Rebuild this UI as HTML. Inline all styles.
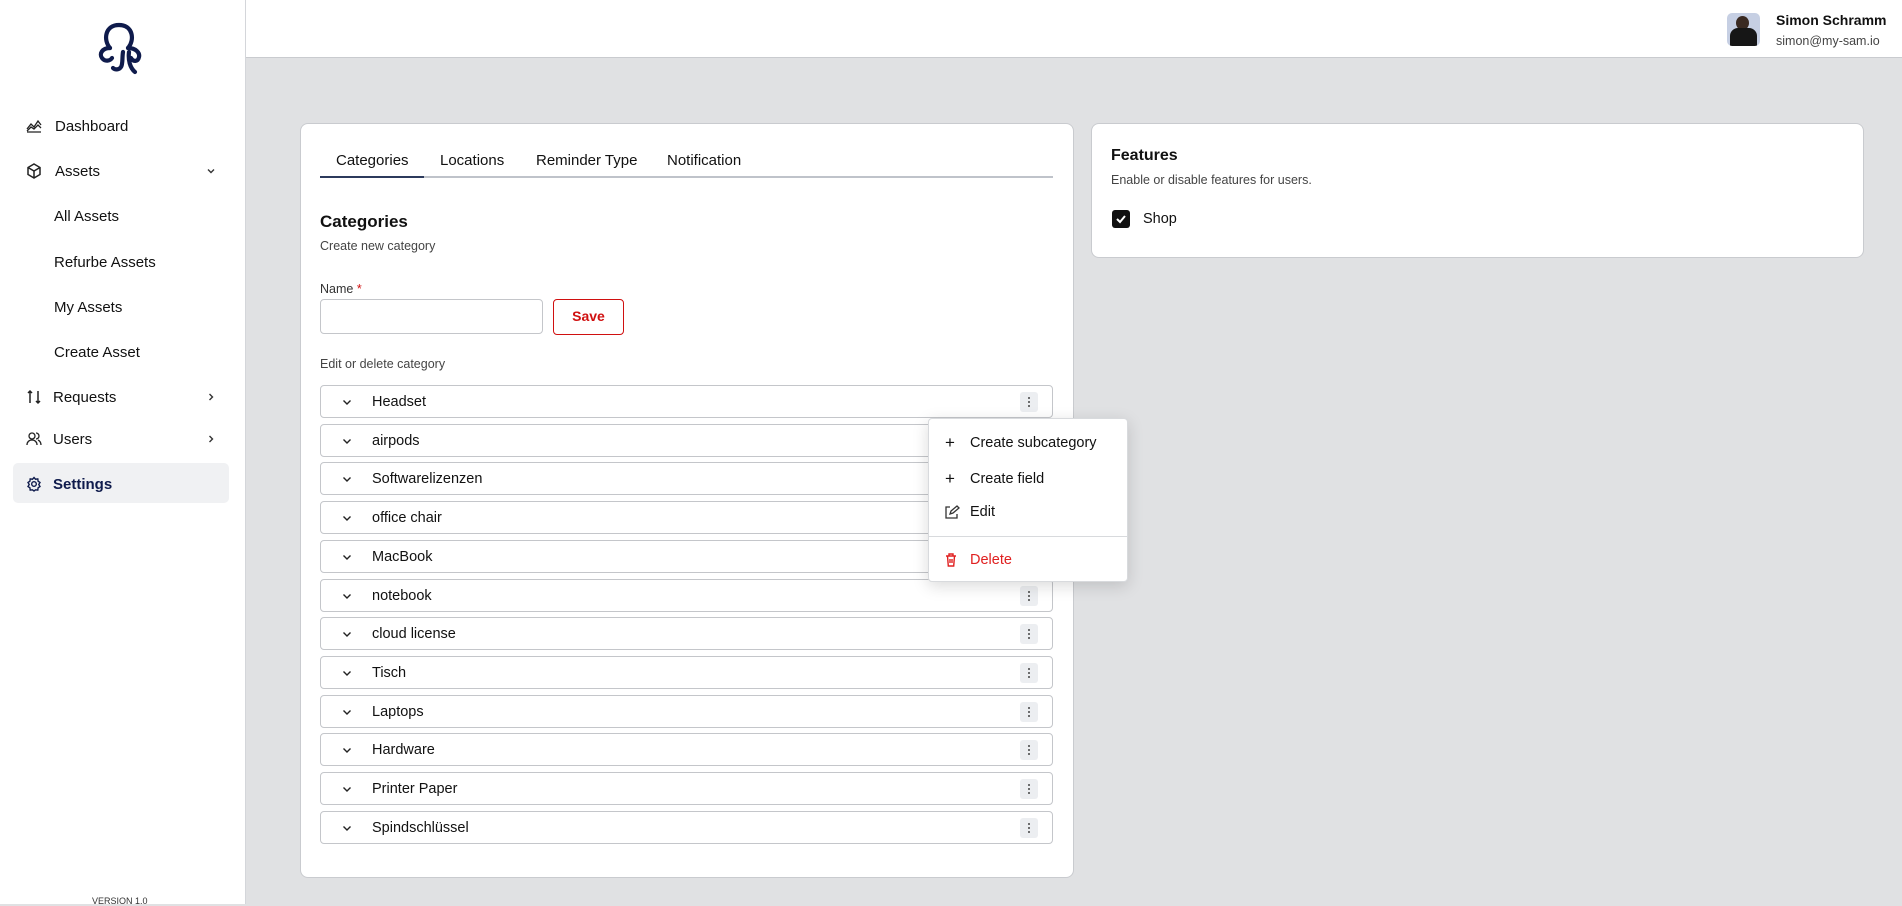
<!DOCTYPE html>
<html><head><meta charset="utf-8"><style>
*{box-sizing:border-box;margin:0;padding:0}
body{width:1902px;height:904px;overflow:hidden;background:#e0e1e3;font-family:"Liberation Sans",sans-serif;color:#111;position:relative}
.abs{position:absolute}
#side{left:0;top:0;width:246px;height:904px;background:#fff;border-right:1px solid #d4d6da}
#head{left:246px;top:0;width:1656px;height:58px;background:#fff;border-bottom:1px solid #c9cbcf}
.nav{position:absolute;left:0;font-size:15px;color:#111;display:flex;align-items:center;height:20px}
.nav svg{position:absolute;left:26px}
.card{position:absolute;background:#fff;border:1px solid #c9cbcf;border-radius:8px}
.row{position:absolute;left:320px;width:733px;height:33px;border:1px solid #c4c6ca;border-radius:4px;background:#fff;font-size:14.5px}
.row .t{position:absolute;left:51px;top:8px}
.row .ch{position:absolute;left:20px;top:10px}
.row .k{position:absolute;right:14px;top:6px;width:18px;height:20px;background:#eceef1;border-radius:3px}
.k i{position:absolute;left:8px;width:2px;height:2px;background:#444;border-radius:1px}
.mi{position:absolute;left:0;font-size:14.5px;display:flex;align-items:center}
</style></head><body>
<div id="side" class="abs">
<svg class="abs" style="left:90px;top:20px" width="70" height="60" viewBox="0 0 70 60" fill="none" stroke="#0f1b4c" stroke-width="4.2" stroke-linecap="round">
<path d="M20 28 C13 20 15 5 29 5 C43 5 45 20 38 28"/>
<path d="M20 28 C12 28 9 34 12 38 C15 42 20 41 22 38"/>
<path d="M38 28 C46 28 50 33 49 37 C48 42 43 42 41 38"/>
<path d="M33 32 C32 38 33 44 31 47 C29 50 25 50 23 48"/>
<path d="M39 32 C38 40 40 48 45 52"/>
</svg>
<div class="nav" style="top:116px;width:246px"><svg width="16" height="16" viewBox="0 0 16 16" fill="none" stroke="#222" stroke-width="1.3"><path d="M1 14h14M1 11l4-5 3 3 4-6 3 4M1 13l4-4 3 2 4-4 3 3"/></svg><span style="position:absolute;left:55px">Dashboard</span></div>
<div class="nav" style="top:161px;width:246px"><svg width="16" height="16" viewBox="0 0 16 16" fill="none" stroke="#222" stroke-width="1.5"><path d="M8 1l6 3.5v7L8 15 2 11.5v-7zM2 4.5L8 8l6-3.5M8 8v7"/></svg><span style="position:absolute;left:55px">Assets</span><svg style="left:206px" width="10" height="10" viewBox="0 0 10 10" fill="none" stroke="#333" stroke-width="1.4"><path d="M2 3.5l3 3 3-3"/></svg></div>
<div class="nav" style="top:206px;left:54px">All Assets</div>
<div class="nav" style="top:252px;left:54px">Refurbe Assets</div>
<div class="nav" style="top:297px;left:54px">My Assets</div>
<div class="nav" style="top:342px;left:54px">Create Asset</div>
<div class="nav" style="top:387px;width:246px"><svg width="16" height="16" viewBox="0 0 16 16" fill="none" stroke="#222" stroke-width="1.5"><path d="M4 2v12M2 4l2-2 2 2M12 14V2M10 12l2 2 2-2"/></svg><span style="position:absolute;left:53px">Requests</span><svg style="left:206px" width="10" height="10" viewBox="0 0 10 10" fill="none" stroke="#333" stroke-width="1.4"><path d="M3.5 2l3 3-3 3"/></svg></div>
<div class="nav" style="top:429px;width:246px"><svg width="16" height="16" viewBox="0 0 16 16" fill="none" stroke="#222" stroke-width="1.3"><circle cx="6" cy="5" r="3"/><path d="M1 14c0-3 2-5 5-5s5 2 5 5M10 2a3 3 0 010 6M12 9c2 1 3 3 3 5"/></svg><span style="position:absolute;left:53px">Users</span><svg style="left:206px" width="10" height="10" viewBox="0 0 10 10" fill="none" stroke="#333" stroke-width="1.4"><path d="M3.5 2l3 3-3 3"/></svg></div>
<div class="abs" style="left:13px;top:463px;width:216px;height:40px;background:#f0f1f3;border-radius:5px"></div>
<div class="nav" style="top:474px;width:246px;color:#0f1b4c;font-weight:bold"><svg width="16" height="16" viewBox="0 0 16 16" fill="none" stroke="#0f1b4c" stroke-width="1.4"><circle cx="8" cy="8" r="2.3"/><path d="M8 1.5l1.5 1.7 2.3-.3.3 2.3L14 6.5 12.8 8.5 14 10.5l-1.9 1.3-.3 2.3-2.3-.3L8 15l-1.5-1.2-2.3.3-.3-2.3L2 10.5 3.2 8.5 2 6.5l1.9-1.3.3-2.3 2.3.3z"/></svg><span style="position:absolute;left:53px">Settings</span></div>
<div class="abs" style="left:92px;top:896px;font-size:9px;color:#333">VERSION 1.0</div>
</div>
<div id="head" class="abs"></div>
<div class="abs" style="left:1727px;top:13px;width:33px;height:33px;border-radius:5px;background:#c6cfe3;overflow:hidden"><div style="position:absolute;left:9px;top:3px;width:13px;height:14px;border-radius:50%;background:#3a2a22"></div><div style="position:absolute;left:3px;top:15px;width:27px;height:22px;border-radius:8px 8px 0 0;background:#161616"></div></div>
<div class="abs" style="left:1776px;top:12px;font-size:14px;font-weight:bold">Simon Schramm</div>
<div class="abs" style="left:1776px;top:34px;font-size:12.5px;color:#444">simon@my-sam.io</div>

<div class="card" style="left:300px;top:123px;width:774px;height:755px"></div>
<div class="abs" style="left:336px;top:152px;font-size:15px">Categories</div>
<div class="abs" style="left:440px;top:152px;font-size:15px">Locations</div>
<div class="abs" style="left:536px;top:152px;font-size:15px">Reminder Type</div>
<div class="abs" style="left:667px;top:152px;font-size:15px">Notification</div>
<div class="abs" style="left:320px;top:176px;width:733px;height:2px;background:#bfc3ca"></div>
<div class="abs" style="left:320px;top:176px;width:104px;height:2px;background:#2c3a5c"></div>
<div class="abs" style="left:320px;top:212px;font-size:17px;font-weight:bold">Categories</div>
<div class="abs" style="left:320px;top:239px;font-size:12.5px;color:#444">Create new category</div>
<div class="abs" style="left:320px;top:282px;font-size:12.5px;color:#333">Name <span style="color:#d01010">*</span></div>
<div class="abs" style="left:320px;top:299px;width:223px;height:35px;border:1px solid #c4c6ca;border-radius:4px"></div>
<div class="abs" style="left:553px;top:299px;width:71px;height:36px;border:1.5px solid #d01010;border-radius:4px;color:#d01010;font-weight:bold;font-size:14px;text-align:center;line-height:33px">Save</div>
<div class="abs" style="left:320px;top:357px;font-size:12.5px;color:#444">Edit or delete category</div>

<div id="rows"></div>
<script>
var n=["Headset","airpods","Softwarelizenzen","office chair","MacBook","notebook","cloud license","Tisch","Laptops","Hardware","Printer Paper","Spindschlüssel"],h="";
n.forEach(function(t,i){var y=385+Math.round(i*38.7);h+='<div class="row" style="top:'+y+'px"><svg class="ch" width="12" height="12" viewBox="0 0 12 12" fill="none" stroke="#222" stroke-width="1.4"><path d="M2.5 4.5l3.5 3.5 3.5-3.5"/></svg><span class="t">'+t+'</span><div class="k"><i style="top:5px"></i><i style="top:9px"></i><i style="top:13px"></i></div></div>';});
document.getElementById("rows").innerHTML=h;
</script>

<div class="abs" style="left:928px;top:418px;width:200px;height:164px;background:#fff;border:1px solid #d8dadd;border-radius:4px;box-shadow:0 4px 16px rgba(0,0,0,.15)">
<div class="mi" style="top:14px;left:16px"><span style="font-size:17px;width:25px">+</span>Create subcategory</div>
<div class="mi" style="top:50px;left:16px"><span style="font-size:17px;width:25px">+</span>Create field</div>
<div class="mi" style="top:85px;left:16px"><svg width="25" height="14" viewBox="0 0 25 14" fill="none" stroke="#333" stroke-width="1.3"><path d="M5 2H1v11h11V9M5 9l1-3 6-5 2 2-6 5z"/></svg>Edit</div>
<div class="abs" style="left:0;top:117px;width:198px;height:1px;background:#d8dadd"></div>
<div class="mi" style="top:133px;left:16px;color:#e02020"><svg width="25" height="14" viewBox="0 0 25 14" fill="none" stroke="#e02020" stroke-width="1.4"><path d="M1 3h10M4 3V1h4v2M2.5 3l.8 10h5.4l.8-10M5 6v4M7 6v4"/></svg>Delete</div>
</div>

<div class="card" style="left:1091px;top:123px;width:773px;height:135px"></div>
<div class="abs" style="left:1111px;top:147px;font-size:16px;font-weight:bold">Features</div>
<div class="abs" style="left:1111px;top:173px;font-size:12.5px;color:#444">Enable or disable features for users.</div>
<div class="abs" style="left:1112px;top:210px;width:18px;height:18px;background:#111;border-radius:3px"><svg width="18" height="18" viewBox="0 0 18 18" fill="none" stroke="#fff" stroke-width="2"><path d="M5 9l3 3 5-6"/></svg></div>
<div class="abs" style="left:1143px;top:211px;font-size:14.5px">Shop</div>
</body></html>
